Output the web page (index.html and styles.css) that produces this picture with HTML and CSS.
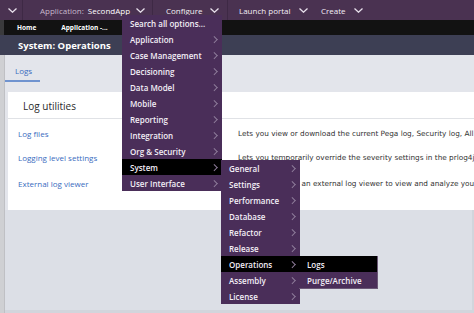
FILE: index.html
```html
<!DOCTYPE html>
<html>
<head>
<meta charset="utf-8">
<link rel="stylesheet" href="styles.css">
</head>
<body>
<div class="page">
  <div class="topbar">
    <div class="tb-item tb-first"><svg class="chev" viewBox="0 0 9 5"><polyline points="0.5,0.5 4.5,4.2 8.5,0.5"/></svg></div>
    <div class="tb-item tb-app"><span class="tb-label">Application:</span><span class="tb-value">SecondApp</span><svg class="chev" viewBox="0 0 9 5"><polyline points="0.5,0.5 4.5,4.2 8.5,0.5"/></svg></div>
    <div class="tb-item tb-conf"><span class="tb-text">Configure</span><svg class="chev" viewBox="0 0 9 5"><polyline points="0.5,0.5 4.5,4.2 8.5,0.5"/></svg></div>
    <div class="tb-item tb-launch"><span class="tb-text">Launch portal</span><svg class="chev" viewBox="0 0 9 5"><polyline points="0.5,0.5 4.5,4.2 8.5,0.5"/></svg></div>
    <div class="tb-item tb-create"><span class="tb-text">Create</span><svg class="chev" viewBox="0 0 9 5"><polyline points="0.5,0.5 4.5,4.2 8.5,0.5"/></svg></div>
  </div>
  <div class="crumbs">
    <span class="crumb crumb-home">Home</span>
    <span class="crumb">Application -...</span>
  </div>
  <div class="header">System: Operations</div>
  <div class="main">
    <div class="strip"></div>
    <div class="content">
      <div class="tabs"><span class="tab">Logs</span></div>
      <div class="card">
        <div class="card-title">Log utilities</div>
        <div class="rows">
          <div class="row"><span class="link">Log files</span><span class="desc">Lets you view or download the current Pega log, Security log, All</span></div>
          <div class="row"><span class="link">Logging level settings</span><span class="desc">Lets you temporarily override the severity settings in the prlog4j</span></div>
          <div class="row row-last"><span class="link">External log viewer</span><span class="desc">Lets you register an external log viewer to view and analyze your</span></div>
        </div>
      </div>
      <div class="rest"></div>
    </div>
  </div>

  <div class="menu menu-main">
    <div class="mi">Search all options...</div>
    <div class="mi">Application<i class="arr"></i></div>
    <div class="mi">Case Management<i class="arr"></i></div>
    <div class="mi">Decisioning<i class="arr"></i></div>
    <div class="mi">Data Model<i class="arr"></i></div>
    <div class="mi">Mobile<i class="arr"></i></div>
    <div class="mi">Reporting<i class="arr"></i></div>
    <div class="mi">Integration<i class="arr"></i></div>
    <div class="mi">Org &amp; Security<i class="arr"></i></div>
    <div class="mi active">System<i class="arr"></i></div>
    <div class="mi">User Interface<i class="arr"></i></div>
  </div>
  <div class="menu menu-sys">
    <div class="mi">General<i class="arr"></i></div>
    <div class="mi">Settings<i class="arr"></i></div>
    <div class="mi">Performance<i class="arr"></i></div>
    <div class="mi">Database<i class="arr"></i></div>
    <div class="mi">Refactor<i class="arr"></i></div>
    <div class="mi">Release<i class="arr"></i></div>
    <div class="mi active">Operations<i class="arr"></i></div>
    <div class="mi">Assembly<i class="arr"></i></div>
    <div class="mi">License<i class="arr"></i></div>
  </div>
  <div class="menu menu-ops">
    <div class="mi active">Logs</div>
    <div class="mi">Purge/Archive</div>
  </div>
</div>
</body>
</html>
```

FILE: styles.css
```css
* { box-sizing: border-box; }
html, body { margin: 0; padding: 0; }
body {
  width: 474px;
  height: 313px;
  overflow: hidden;
  font-family: "Open Sans", "Noto Sans", sans-serif;
  background: #dcdfe6;
}
.page {
  position: relative;
  width: 474px;
  height: 313px;
  display: flex;
  flex-direction: column;
}

/* top bar */
.topbar {
  height: 20px;
  background: #4a3251;
  display: flex;
  align-items: center;
  font-size: 8px;
  color: #ffffff;
  white-space: nowrap;
}
.tb-item {
  height: 20px;
  display: flex;
  align-items: center;
  border-right: 1px solid #3e2945;
}
.chev {
  width: 9px;
  height: 5px;
  fill: none;
  stroke: #e8e0ec;
  stroke-width: 1.3;
}
.tb-first { width: 23px; padding-left: 8px; }
.tb-app { width: 130px; padding-left: 17px; }
.tb-label { color: #c6b8cc; margin-right: 4px; }
.tb-value { color: #ffffff; margin-right: 6px; }
.tb-conf { width: 75px; padding-left: 13px; }
.tb-launch { width: 85px; padding-left: 11px; border-right: none; }
.tb-create { padding-left: 8px; border-right: none; }
.tb-text { margin-right: 8px; color: #f4eff6; }

/* breadcrumb */
.crumbs {
  height: 15px;
  background: #121212;
  border-left: 4px solid #3a3a3c;
  display: flex;
  align-items: center;
  font-size: 6.5px;
  font-weight: 700;
  color: #ffffff;
  padding-left: 13px;
  white-space: nowrap;
}
.crumb-home { margin-right: 25px; }

/* header */
.header {
  height: 20px;
  background: #3d3f54;
  color: #ffffff;
  font-size: 9.5px;
  font-weight: 700;
  display: flex;
  align-items: center;
  padding-left: 18px;
}

/* main */
.main {
  flex: 1;
  display: flex;
  min-height: 0;
}
.strip {
  flex: none;
  width: 5px;
  background: #cfd0d3;
  border-right: 1px solid #bfc0c4;
}
.content {
  flex: 1;
  min-width: 0;
  display: flex;
  flex-direction: column;
  background: #e3e5eb;
  overflow: hidden;
}
.tabs {
  height: 37px;
  flex: none;
  display: flex;
  align-items: flex-start;
}
.tab {
  margin-top: 9px;
  width: 35px;
  padding-left: 10px;
  height: 18px;
  font-size: 8px;
  line-height: 14px;
  color: #3a6cc0;
  border-bottom: 2px solid #6f93cf;
}
.card {
  flex: none;
  margin-left: 3px;
  background: #ffffff;
  height: 118px;
  overflow: hidden;
}
.card-title {
  height: 27px;
  border-bottom: 1px solid #e0e2e6;
  font-size: 10px;
  color: #2a2a2a;
  padding-left: 15px;
  padding-top: 7px;
}
.rows {
  padding-top: 2px;
}
.row {
  height: 24px;
  display: flex;
  align-items: center;
}
.row-last { margin-top: 2px; }
.link {
  width: 230px;
  flex: none;
  padding-left: 10px;
  font-size: 8px;
  color: #3a6cc0;
}
.desc {
  font-family: "DejaVu Sans", Verdana, sans-serif;
  font-size: 7.3px;
  color: #333333;
  white-space: nowrap;
}
.rest {
  flex: 1;
  background: #dcdfe6;
  border-right: 2px solid #d2d5dc;
  border-bottom: 3px solid #d2d5dc;
}

/* menus */
.menu {
  position: absolute;
  background: #4a2e59;
  font-size: 8px;
  font-weight: 600;
  color: #f3eef6;
}
.menu-main { left: 122px; top: 15px; width: 100px; }
.menu-sys { left: 221px; top: 160px; width: 79px; }
.menu-ops { left: 299px; top: 256px; width: 79px; border-right: 1px solid #6b5876; border-bottom: 1px solid #6b5876; }
.mi {
  height: 16px;
  display: flex;
  align-items: center;
  justify-content: space-between;
  padding-left: 8px;
  padding-right: 6px;
  white-space: nowrap;
}
.mi.active { background: #000000; }
.arr {
  width: 4.5px;
  height: 4.5px;
  border-top: 1px solid #8f7d9b;
  border-right: 1px solid #8f7d9b;
  transform: rotate(45deg);
}
```
